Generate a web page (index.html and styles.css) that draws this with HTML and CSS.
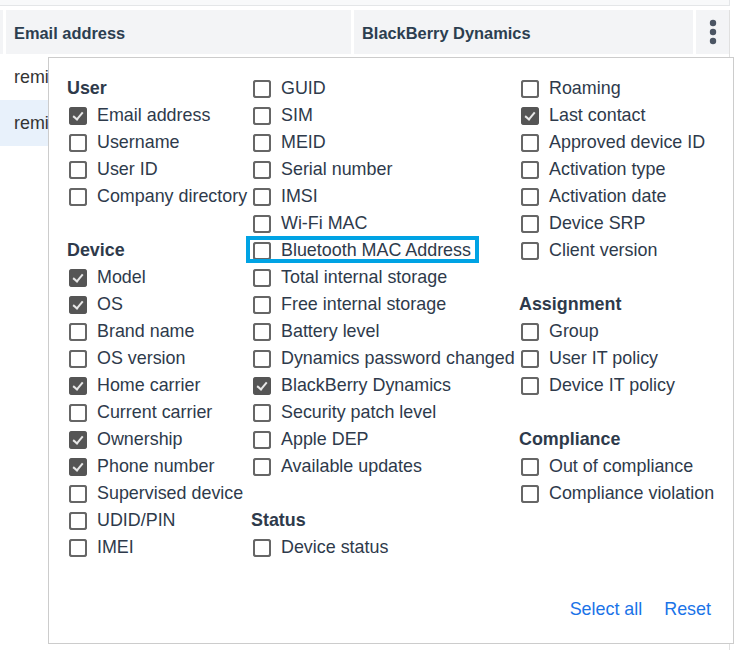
FILE: index.html
```html
<!DOCTYPE html>
<html>
<head>
<meta charset="utf-8">
<link rel="stylesheet" href="styles.css">
</head>
<body>
<div class="page">
  <div class="topstrip"></div>
  <div class="table">
    <div class="thead">
      <div class="th th-stub"></div>
      <div class="th">Email address</div>
      <div class="th">BlackBerry Dynamics</div>
      <div class="th th-menu">
        <svg width="8" height="26" viewBox="0 0 8 26"><circle cx="4" cy="4" r="3.2" fill="#4b5563"/><circle cx="4" cy="13" r="3.2" fill="#4b5563"/><circle cx="4" cy="22" r="3.2" fill="#4b5563"/></svg>
      </div>
    </div>
    <div class="trow"><div class="td td-stub"></div><div class="td">remi</div></div>
    <div class="trow trow-sel"><div class="td td-stub"></div><div class="td">remi</div></div>
  </div>

  <div class="popup">
    <div class="cols">
      <div class="col col1">
        <div class="heading">User</div>
        <div class="item"><span class="cb on"></span>Email address</div>
        <div class="item"><span class="cb"></span>Username</div>
        <div class="item"><span class="cb"></span>User ID</div>
        <div class="item"><span class="cb"></span>Company directory</div>
        <div class="spacer"></div>
        <div class="heading">Device</div>
        <div class="item"><span class="cb on"></span>Model</div>
        <div class="item"><span class="cb on"></span>OS</div>
        <div class="item"><span class="cb"></span>Brand name</div>
        <div class="item"><span class="cb"></span>OS version</div>
        <div class="item"><span class="cb on"></span>Home carrier</div>
        <div class="item"><span class="cb"></span>Current carrier</div>
        <div class="item"><span class="cb on"></span>Ownership</div>
        <div class="item"><span class="cb on"></span>Phone number</div>
        <div class="item"><span class="cb"></span>Supervised device</div>
        <div class="item"><span class="cb"></span>UDID/PIN</div>
        <div class="item"><span class="cb"></span>IMEI</div>
      </div>
      <div class="col col2">
        <div class="item"><span class="cb"></span>GUID</div>
        <div class="item"><span class="cb"></span>SIM</div>
        <div class="item"><span class="cb"></span>MEID</div>
        <div class="item"><span class="cb"></span>Serial number</div>
        <div class="item"><span class="cb"></span>IMSI</div>
        <div class="item"><span class="cb"></span>Wi-Fi MAC</div>
        <div class="item"><span class="hl"><span class="cb"></span>Bluetooth MAC Address</span></div>
        <div class="item"><span class="cb"></span>Total internal storage</div>
        <div class="item"><span class="cb"></span>Free internal storage</div>
        <div class="item"><span class="cb"></span>Battery level</div>
        <div class="item"><span class="cb"></span>Dynamics password changed</div>
        <div class="item"><span class="cb on"></span>BlackBerry Dynamics</div>
        <div class="item"><span class="cb"></span>Security patch level</div>
        <div class="item"><span class="cb"></span>Apple DEP</div>
        <div class="item"><span class="cb"></span>Available updates</div>
        <div class="spacer"></div>
        <div class="heading">Status</div>
        <div class="item"><span class="cb"></span>Device status</div>
      </div>
      <div class="col col3">
        <div class="item"><span class="cb"></span>Roaming</div>
        <div class="item"><span class="cb on"></span>Last contact</div>
        <div class="item"><span class="cb"></span>Approved device ID</div>
        <div class="item"><span class="cb"></span>Activation type</div>
        <div class="item"><span class="cb"></span>Activation date</div>
        <div class="item"><span class="cb"></span>Device SRP</div>
        <div class="item"><span class="cb"></span>Client version</div>
        <div class="spacer"></div>
        <div class="heading">Assignment</div>
        <div class="item"><span class="cb"></span>Group</div>
        <div class="item"><span class="cb"></span>User IT policy</div>
        <div class="item"><span class="cb"></span>Device IT policy</div>
        <div class="spacer"></div>
        <div class="heading">Compliance</div>
        <div class="item"><span class="cb"></span>Out of compliance</div>
        <div class="item"><span class="cb"></span>Compliance violation</div>
      </div>
    </div>
    <div class="footer">
      <a class="link">Select all</a>
      <a class="link">Reset</a>
    </div>
  </div>
</div>
</body>
</html>
```

FILE: styles.css
```css
html, body {
  margin: 0;
  padding: 0;
  background: #ffffff;
  font-family: "Liberation Sans", Arial, sans-serif;
}

.page {
  position: relative;
  width: 742px;
  height: 650px;
  overflow: hidden;
}

.topstrip {
  width: 729px;
  height: 5px;
  background: #f8f9fa;
  border-bottom: 1px solid #e4e6e8;
  border-right: 1px solid #e4e6e8;
}

.table {
  width: 729px;
  margin-top: 4px;
  height: 640px;
  border-right: 1px solid #e0e0e0;
}

.thead {
  display: grid;
  grid-template-columns: 3px 345px 339px 33px;
  column-gap: 3px;
  height: 44px;
}

.th {
  background: #f3f4f6;
  display: flex;
  align-items: center;
  padding-left: 8px;
  padding-top: 2px;
  box-sizing: border-box;
  font-size: 16.4px;
  font-weight: bold;
  color: #2c3e50;
}

.th-stub {
  padding: 0;
}

.th-menu {
  padding: 0;
  justify-content: center;
}

.trow {
  display: grid;
  grid-template-columns: 3px 345px;
  column-gap: 3px;
  height: 46px;
}

.trow-sel {
  background: #e8f1fb;
}

.td {
  display: flex;
  align-items: center;
  padding-left: 8px;
  font-size: 17.9px;
  color: #333333;
}

.td-stub {
  padding: 0;
}

.popup {
  position: absolute;
  left: 48px;
  top: 57px;
  width: 684px;
  height: 585px;
  background: #ffffff;
  border: 1px solid #cccccc;
  box-sizing: content-box;
  display: flex;
  flex-direction: column;
}

.cols {
  display: grid;
  grid-template-columns: 184px 268px 1fr;
  padding: 17px 0 0 18px;
}

.col {
  display: flex;
  flex-direction: column;
}

.heading,
.item,
.spacer {
  height: 27px;
}

.heading {
  display: flex;
  align-items: center;
  font-size: 17.9px;
  font-weight: bold;
  color: #2e3a4b;
}

.item {
  display: flex;
  align-items: center;
  font-size: 17.9px;
  color: #2e3a4b;
  white-space: nowrap;
}

.cb {
  flex: none;
  box-sizing: border-box;
  width: 18px;
  height: 18px;
  margin-left: 2px;
  margin-right: 10px;
  border: 2px solid #666666;
  border-radius: 3px;
  background: #ffffff;
  box-shadow: 0 0 0.6px #777777;
  position: relative;
}

.cb.on {
  background: #555555;
  border-color: #555555;
}

.cb.on::after {
  content: "";
  position: absolute;
  left: 4px;
  top: 1px;
  width: 4px;
  height: 8px;
  border-right: 2px solid #e8e8e8;
  border-bottom: 2px solid #e8e8e8;
  transform: rotate(40deg);
}

.hl {
  display: flex;
  align-items: center;
  position: relative;
}

.hl::after {
  content: "";
  position: absolute;
  left: -5px;
  right: -8px;
  top: -4px;
  bottom: -2px;
  border: 4px solid #00a3e4;
  pointer-events: none;
}

.footer {
  display: flex;
  justify-content: flex-end;
  gap: 22px;
  margin-top: auto;
  padding: 0 22px 20px 0;
}

.link {
  font-size: 17.9px;
  color: #1a73e8;
  line-height: 27px;
  cursor: pointer;
}
```
